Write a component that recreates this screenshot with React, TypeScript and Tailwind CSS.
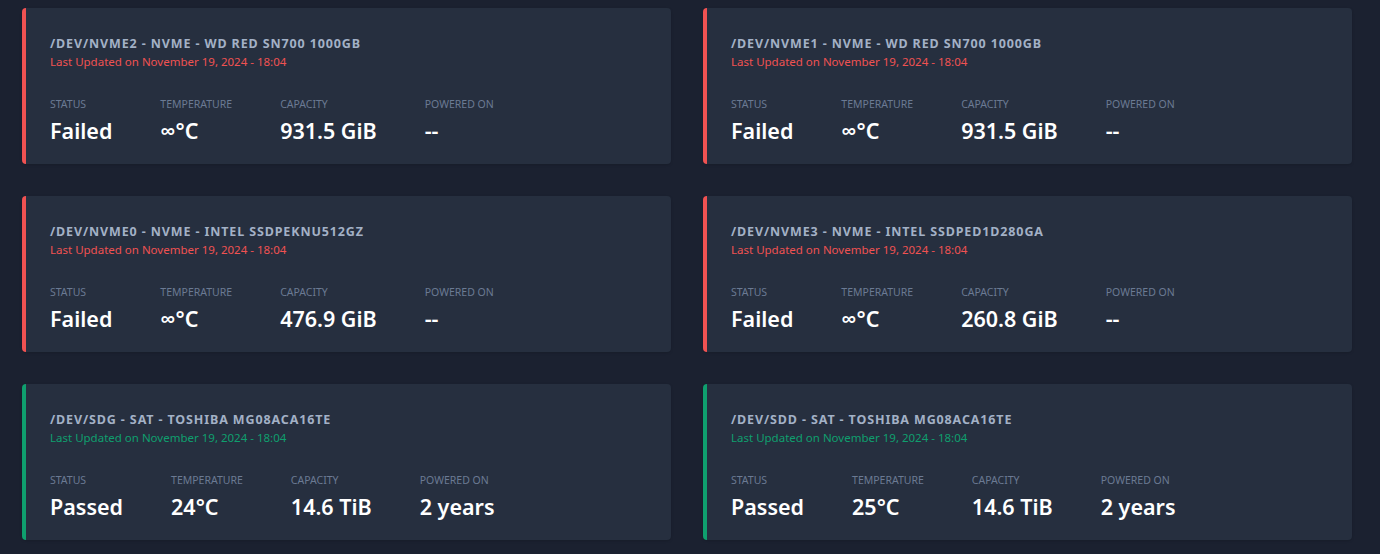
import React from 'react';

type Drive = {
  title: string;
  ok: boolean;
  temp: string;
  capacity: string;
  powered: string;
};

const drives: Drive[] = [
  { title: '/dev/nvme2 - nvme - WD Red SN700 1000GB', ok: false, temp: '∞°C', capacity: '931.5 GiB', powered: '--' },
  { title: '/dev/nvme1 - nvme - WD Red SN700 1000GB', ok: false, temp: '∞°C', capacity: '931.5 GiB', powered: '--' },
  { title: '/dev/nvme0 - nvme - INTEL SSDPEKNU512GZ', ok: false, temp: '∞°C', capacity: '476.9 GiB', powered: '--' },
  { title: '/dev/nvme3 - nvme - INTEL SSDPED1D280GA', ok: false, temp: '∞°C', capacity: '260.8 GiB', powered: '--' },
  { title: '/dev/sdg - sat - TOSHIBA MG08ACA16TE', ok: true, temp: '24°C', capacity: '14.6 TiB', powered: '2 years' },
  { title: '/dev/sdd - sat - TOSHIBA MG08ACA16TE', ok: true, temp: '25°C', capacity: '14.6 TiB', powered: '2 years' },
];

const Stat = ({ label, value }: { label: string; value: string }) => (
  <div className="flex flex-col">
    <span className="text-[10.5px] leading-[14px] uppercase text-[#6b7a93]">{label}</span>
    <span className="mt-[6px] text-[21.5px] leading-[28px] font-semibold text-white">{value}</span>
  </div>
);

const DriveCard = ({ d }: { d: Drive }) => (
  <div
    className={`h-[156px] rounded bg-[#262f3f] border-l-4 pl-6 pr-6 pt-[28px] shadow-sm ${
      d.ok ? 'border-[#0f9f6e]' : 'border-[#f05252]'
    }`}
  >
    <div className="text-[12.5px] leading-[16px] font-bold uppercase tracking-[0.07em] text-[#a3b1c6]">
      {d.title}
    </div>
    <div className={`mt-[1px] text-[11.5px] leading-[17px] ${d.ok ? 'text-[#0f9f6e]' : 'text-[#f05252]'}`}>
      Last Updated on November 19, 2024 - 18:04
    </div>
    <div className="mt-[27px] flex gap-12">
      <Stat label="Status" value={d.ok ? 'Passed' : 'Failed'} />
      <Stat label="Temperature" value={d.temp} />
      <Stat label="Capacity" value={d.capacity} />
      <Stat label="Powered On" value={d.powered} />
    </div>
  </div>
);

export default function App() {
  return (
    <div
      className="min-h-screen bg-[#1b2130] pl-[22px] pr-[28px] pt-2"
      style={{ fontFamily: '"Noto Sans", "Open Sans", sans-serif' }}
    >
      <div className="grid grid-cols-2 gap-8">
        {drives.map((d) => (
          <DriveCard key={d.title} d={d} />
        ))}
      </div>
    </div>
  );
}
